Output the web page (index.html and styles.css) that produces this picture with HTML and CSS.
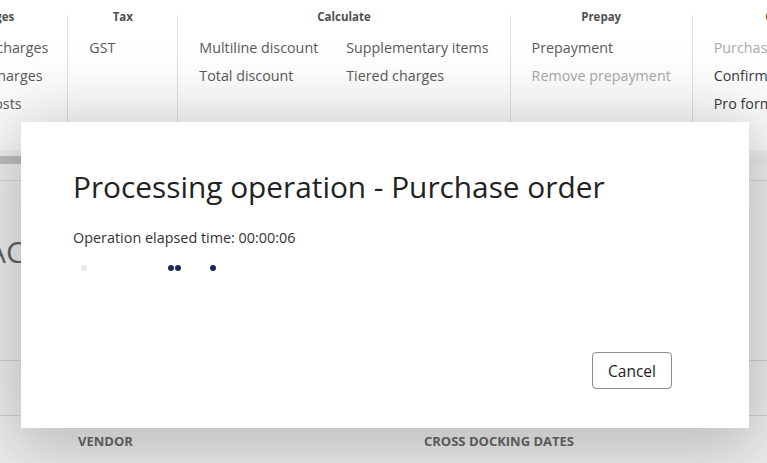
FILE: index.html
```html
<!DOCTYPE html>
<html lang="en">
<head>
    <meta charset="UTF-8">
    <meta name="viewport" content="width=device-width, initial-scale=1.0">
    <title>Purchase order - Processing operation</title>
    <link rel="stylesheet" href="styles.css">
</head>
<body>
    <div class="page">
        <div class="ribbon">
            <div class="group group-first">
                <div class="group-title">Charges</div>
                <div class="group-items">
                    <span class="item">Maintain charges</span>
                    <span class="item">Allocate charges</span>
                    <span class="item">Landed costs</span>
                </div>
            </div>
            <div class="sep"></div>
            <div class="group group-narrow">
                <div class="group-title">Tax</div>
                <div class="group-items">
                    <span class="item">GST</span>
                </div>
            </div>
            <div class="sep"></div>
            <div class="group">
                <div class="group-title">Calculate</div>
                <div class="group-items two-cols">
                    <span class="item">Multiline discount</span>
                    <span class="item">Supplementary items</span>
                    <span class="item">Total discount</span>
                    <span class="item">Tiered charges</span>
                </div>
            </div>
            <div class="sep"></div>
            <div class="group">
                <div class="group-title">Prepay</div>
                <div class="group-items">
                    <span class="item">Prepayment</span>
                    <span class="item disabled">Remove prepayment</span>
                </div>
            </div>
            <div class="sep"></div>
            <div class="group">
                <div class="group-title">Generate</div>
                <div class="group-items">
                    <span class="item disabled">Purchase order</span>
                    <span class="item strong">Confirmation</span>
                    <span class="item strong">Pro forma confirmation</span>
                </div>
            </div>
        </div>

        <div class="ribbon-scroll">
            <div class="ribbon-thumb"></div>
        </div>

        <div class="content">
            <div class="tab-strip"></div>
            <h2 class="record-title">ACCOUNTS PAYABLE</h2>
            <div class="section-line"></div>
            <div class="section-line second"></div>
            <div class="field-groups">
                <span class="field-group">Vendor</span>
                <span class="field-group">Cross docking dates</span>
            </div>
        </div>
    </div>

    <div class="dialog" role="dialog" aria-labelledby="dialog-title">
        <h1 id="dialog-title">Processing operation - Purchase order</h1>
        <p class="elapsed">Operation elapsed time: 00:00:06</p>
        <div class="progress">
            <span class="dot dot-a faint"></span>
            <span class="dot dot-b"></span>
            <span class="dot dot-c"></span>
            <span class="dot dot-d"></span>
        </div>
        <div class="dialog-actions">
            <button type="button" class="btn">Cancel</button>
        </div>
    </div>
</body>
</html>
```

FILE: styles.css
```css
:root {
    --text-color: #333;
    --ribbon-text: #5a5a5a;
    --disabled-text: #aaa;
    --divider: #e1e1e1;
    --dot-color: #1d2951;
}

body {
    margin: 0;
    padding: 0;
    font-family: "Open Sans", "Noto Sans", sans-serif;
    color: var(--text-color);
    background: #f4f4f4;
    overflow: hidden;
    height: 463px;
}

.page {
    width: 1100px;
    margin-left: -87px;
}

/* ribbon */

.ribbon {
    display: flex;
    height: 150px;
    padding-top: 7px;
    box-sizing: border-box;
    background: #fff;
}

.group {
    padding: 0 21px;
}

.group-first {
    padding-right: 19px;
}

.group-narrow {
    min-width: 67px;
}

.group-title {
    height: 19px;
    line-height: 19px;
    margin-bottom: 8px;
    text-align: center;
    font-size: 11.5px;
    font-weight: 700;
    color: #505050;
    white-space: nowrap;
}

.group-items {
    display: flex;
    flex-direction: column;
}

.group-items.two-cols {
    display: grid;
    grid-template-columns: auto auto;
    column-gap: 28px;
}

.item {
    height: 28px;
    line-height: 28px;
    font-size: 14.3px;
    color: var(--ribbon-text);
    white-space: nowrap;
}

.item.disabled {
    color: var(--disabled-text);
}

.item.strong {
    color: #3a3a3a;
}

.sep {
    width: 1px;
    margin-top: 8px;
    background: var(--divider);
}

.ribbon-scroll {
    height: 8px;
    margin-top: 6px;
    background: #f0f0f0;
}

.ribbon-thumb {
    width: 440px;
    height: 100%;
    background: #c2c2c2;
}

/* page content behind the dialog */

.content {
    padding-bottom: 40px;
}

.tab-strip {
    height: 16px;
    border-bottom: 1px solid #dcdcdc;
}

.record-title {
    margin: 50px 0 0 74px;
    font-size: 30px;
    font-weight: 400;
    color: #666;
}

.section-line {
    margin-top: 88px;
    border-top: 1px solid #d6d6d6;
}

.section-line.second {
    margin-top: 54px;
}

.field-groups {
    display: flex;
    padding: 16px 0 0 165px;
}

.field-group {
    width: 346px;
    font-size: 13px;
    font-weight: 700;
    text-transform: uppercase;
    color: #6a6a6a;
}

/* dialog */

.dialog {
    position: absolute;
    left: 21px;
    top: 122px;
    width: 728px;
    height: 306px;
    box-sizing: border-box;
    padding: 45px 77px 39px 52px;
    display: flex;
    flex-direction: column;
    background: #fff;
    box-shadow: 0 14px 70px 16px rgba(0, 0, 0, 0.23);
}

.dialog h1 {
    margin: 0;
    font-size: 29.8px;
    font-weight: 400;
    line-height: 40px;
    color: #222;
}

.elapsed {
    margin: 22px 0 0;
    font-size: 14.4px;
    line-height: 18px;
    color: #333;
}

.progress {
    position: relative;
    height: 20px;
    margin-top: 11px;
}

.dot {
    position: absolute;
    top: 7px;
    width: 6px;
    height: 6px;
    border-radius: 50%;
    background: var(--dot-color);
}

.dot.faint {
    background: #e9e9ee;
}

.dot-a { left: 8px; }
.dot-b { left: 95px; }
.dot-c { left: 102px; }
.dot-d { left: 137px; }

.dialog-actions {
    margin-top: auto;
    display: flex;
    justify-content: flex-end;
}

.btn {
    width: 80px;
    height: 37px;
    font-family: inherit;
    font-size: 15.5px;
    color: #222;
    background: #fff;
    border: 1px solid #8d8d8d;
    border-radius: 4px;
    cursor: pointer;
}
```
